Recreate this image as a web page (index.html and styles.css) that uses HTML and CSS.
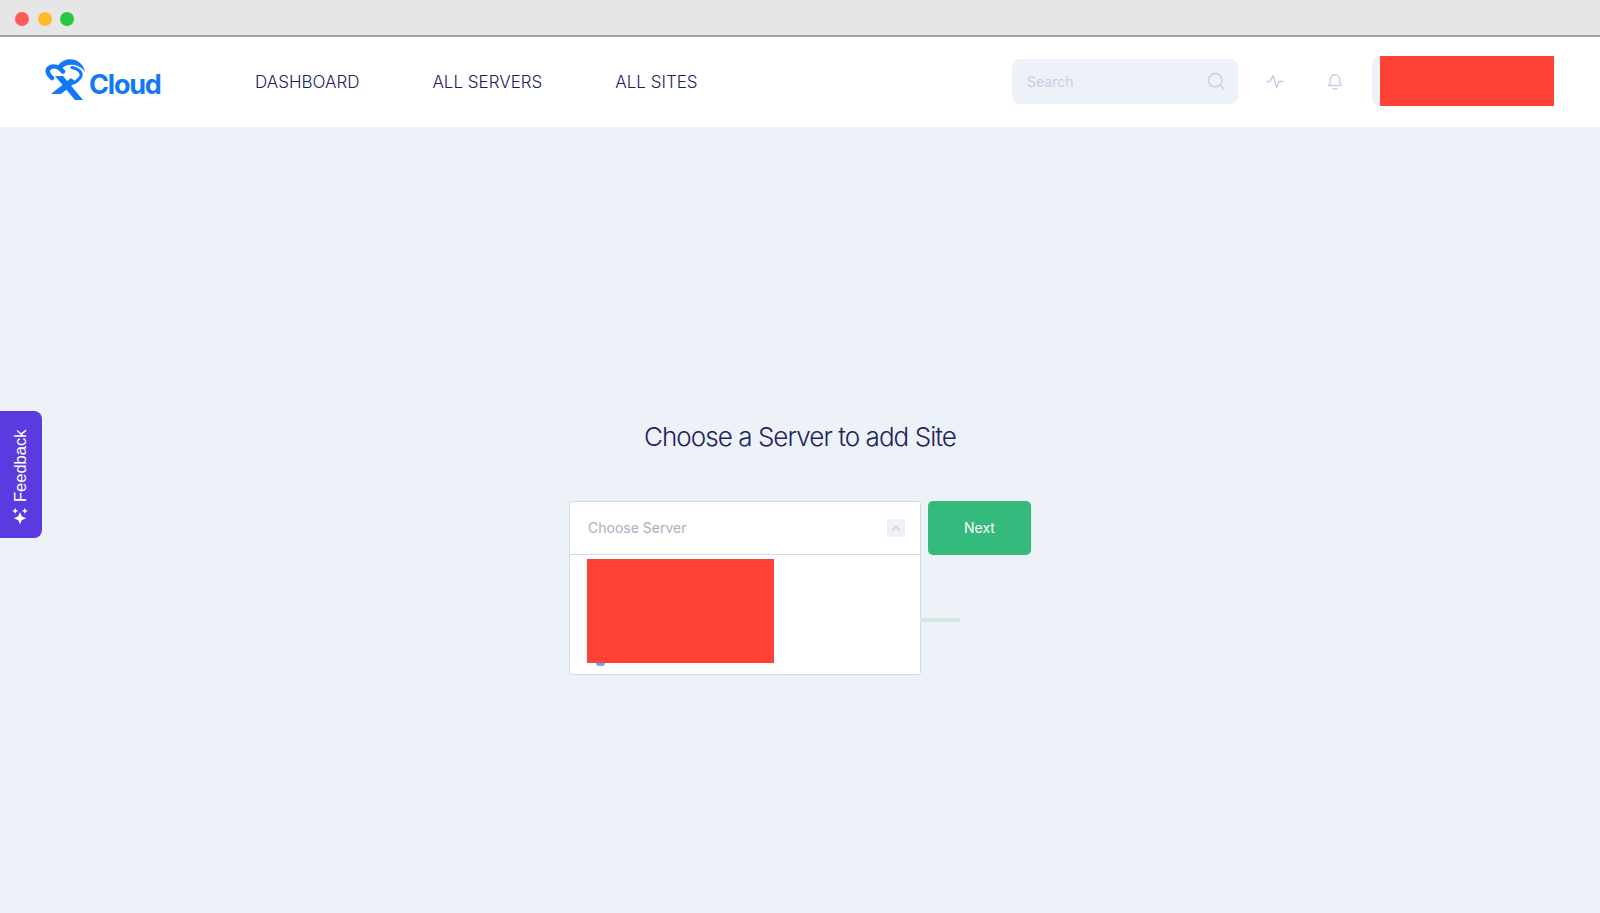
FILE: index.html
```html
<!DOCTYPE html>
<html lang="en">
<head>
<meta charset="utf-8">
<title>Choose a Server</title>
<link rel="stylesheet" href="styles.css">
</head>
<body>
<div class="titlebar">
  <span class="dot dot-red"></span><span class="dot dot-yellow"></span><span class="dot dot-green"></span>
</div>
<header class="topnav">
  <a class="logo" href="#">
    <svg class="logo-mark" viewBox="0 0 42 42" width="42" height="42" aria-hidden="true">
      <path class="logo-stroke" d="M7 19 C2 15 1.500 10.500 5 8.500 C9 6 14 8 18 12.500"/>
      <path d="M13 7 C16 1 24 -1 30 1 C35 3 39 7 40 13 C36 7 30 5 24 6 C20 6.500 18 8 17 10 Z" fill="#1278f5"/>
      <path class="logo-stroke logo-thin" d="M27 8.500 C33 9.500 37 13 36 17 C35 20 32 22 29 24"/>
      <path d="M10 17 L18 17 L38 41 L30 41 Z" fill="#1278f5"/>
      <path d="M26 19 L31 23 L16 35 L6 35 Z" fill="#1278f5"/>
    </svg>
    <span class="logo-text">Cloud</span>
  </a>
  <nav class="menu">
    <a href="#">DASHBOARD</a>
    <a href="#">ALL SERVERS</a>
    <a href="#">ALL SITES</a>
  </nav>
  <div class="tools">
    <div class="search">
      <span class="search-label">Search</span>
      <svg class="icon" viewBox="0 0 18 18" width="18" height="18" aria-hidden="true"><circle cx="8.200" cy="8.200" r="6.700"/><path d="M13 13l3.600 3.600"/></svg>
    </div>
    <svg class="icon icon-pulse" viewBox="0 0 18 18" width="18" height="18" aria-hidden="true"><path d="M1 9.500h3l3-6 3.600 12 2.400-6h4"/></svg>
    <svg class="icon icon-bell" viewBox="0 0 18 18" width="18" height="18" aria-hidden="true"><path d="M2.500 13.500c1.200-1 1.800-2 1.800-4V7.500a4.700 4.700 0 0 1 9.400 0v2c0 2 .6 3 1.800 4z"/><path d="M7 16.700h4"/></svg>
    <div class="account"><div class="redact redact-account"></div></div>
  </div>
</header>
<main class="content">
  <h1 class="title">Choose a Server to add Site</h1>
  <div class="picker">
    <div class="select">
      <div class="select-head">
        <span class="select-label">Choose Server</span>
        <span class="chevron"><svg viewBox="0 0 10 6" width="10" height="6" aria-hidden="true"><path d="M2 4.500l3-3 3 3"/></svg></span>
      </div>
      <div class="select-list">
        <div class="redact redact-list"></div>
        <span class="list-mark"></span>
      </div>
      <span class="green-line"></span>
    </div>
    <button class="next" type="button">Next</button>
  </div>
</main>
<aside class="feedback">
  <svg viewBox="0 0 16 16" width="18" height="18" aria-hidden="true"><path d="M6 2.500l1.700 4L11.500 8 7.700 9.500 6 13.500 4.300 9.500.5 8l3.800-1.500z"/><path d="M12.500 1l.8 2 2 .8-2 .8-.8 2-.8-2-2-.8 2-.8zM12.500 9.500l.8 2 2 .8-2 .8-.8 2-.8-2-2-.8 2-.8z"/></svg>
  <span>Feedback</span>
</aside>
</body>
</html>
```
FILE: styles.css
```css
* { box-sizing: border-box; }
html, body { margin: 0; height: 100%; }
body {
  display: flex;
  flex-direction: column;
  height: 913px;
  overflow: hidden;
  background: #edf1f8;
  font-family: Inter, "Liberation Sans", sans-serif;
  color: #1c2260;
}
.titlebar {
  display: flex;
  align-items: center;
  gap: 8.500px;
  height: 37px;
  padding: 2px 0 0 15px;
  background: #e6e6e6;
  border-bottom: 2px solid #a3a3a3;
}
.dot { width: 14px; height: 14px; border-radius: 50%; }
.dot-red { background: #fd5b57; }
.dot-yellow { background: #febb2e; }
.dot-green { background: #28c840; }
.topnav {
  display: flex;
  align-items: center;
  height: 90px;
  padding: 0 46px 0 45px;
  background: #fff;
}
.logo {
  display: flex;
  align-items: flex-end;
  gap: 2px;
  width: 210px;
  margin-top: -4px;
  color: #1278f5;
  text-decoration: none;
}
.logo-stroke { fill: none; stroke: #1278f5; stroke-width: 4.500; stroke-linecap: round; }
.logo-thin { stroke-width: 3; }
.logo-text {
  font-size: 27px;
  font-weight: 700;
  line-height: 32px;
  letter-spacing: -1.200px;
}
.menu { display: flex; gap: 73px; }
.menu a {
  color: #1c2260;
  font-size: 17px;
  font-weight: 300;
  text-decoration: none;
}
.tools { display: flex; align-items: center; margin-left: auto; margin-top: -2px; }
.icon { fill: none; stroke: #c5cfe3; stroke-width: 1.400; stroke-linecap: round; stroke-linejoin: round; }
.search {
  display: flex;
  align-items: center;
  justify-content: space-between;
  width: 226px;
  height: 45px;
  padding: 0 13px 0 15px;
  border-radius: 8px;
  background: #edf1f8;
}
.search-label { font-size: 14px; color: #c5cfe3; }
.icon-pulse { margin-left: 28px; }
.icon-bell { margin-left: 42px; }
.account {
  margin-left: 28px;
  padding-left: 8px;
  background: #edf1f8;
  border-radius: 8px 0 0 8px;
}
.redact { background: #ff4136; }
.redact-account { width: 174px; height: 50px; }
.content {
  display: flex;
  flex-direction: column;
  align-items: center;
  flex: 1;
  padding-top: 293px;
}
.title {
  margin: 0 0 47px;
  font-size: 26px;
  font-weight: 300;
  line-height: 34px;
  letter-spacing: -0.950px;
  color: #1c2260;
}
.picker { display: flex; align-items: flex-start; gap: 7px; }
.select {
  position: relative;
  width: 352px;
  background: #fff;
  border: 1px solid #d3d8e4;
  border-radius: 3px;
}
.select-head {
  display: flex;
  align-items: center;
  justify-content: space-between;
  height: 53px;
  padding: 0 15px 0 18px;
  border-bottom: 1px solid #d3d8e4;
  font-size: 14px;
  color: #a9afc0;
}
.select-label { padding-bottom: 2px; }
.chevron {
  display: flex;
  align-items: center;
  justify-content: center;
  width: 18px;
  height: 18px;
  margin-bottom: 1px;
  background: #edf1f8;
  border-radius: 2px;
}
.chevron path { fill: none; stroke: #c5cfe3; stroke-width: 1.400; stroke-linecap: round; stroke-linejoin: round; }
.select-list {
  position: relative;
  height: 119px;
  padding: 4px 0 0 17px;
}
.redact-list { width: 187px; height: 104px; }
.list-mark {
  position: absolute;
  left: 26px;
  top: 108px;
  width: 9px;
  height: 3px;
  border-radius: 0 0 5px 5px;
  background: #6fa5f2;
}
.green-line {
  position: absolute;
  left: 100%;
  top: 116px;
  width: 40px;
  height: 4px;
  background: #cfe8e4;
  border-radius: 0 2px 2px 0;
}
.next {
  width: 103px;
  height: 54px;
  padding-bottom: 2px;
  border: 0;
  border-radius: 5px;
  background: #34ba7c;
  color: #fff;
  font: 400 14px Inter, "Liberation Sans", sans-serif;
}
.feedback {
  position: absolute;
  left: 0;
  top: 411px;
  display: flex;
  align-items: center;
  justify-content: center;
  gap: 5px;
  width: 42px;
  height: 127px;
  padding: 0 0 5px 2px;
  writing-mode: vertical-rl;
  transform: rotate(180deg);
  background: #5b3ae0;
  border-radius: 8px 0 0 8px;
  color: #fff;
  font-family: "Liberation Sans", sans-serif;
  font-size: 16.500px;
}
.feedback svg { fill: #fff; transform: rotate(90deg); }
```
